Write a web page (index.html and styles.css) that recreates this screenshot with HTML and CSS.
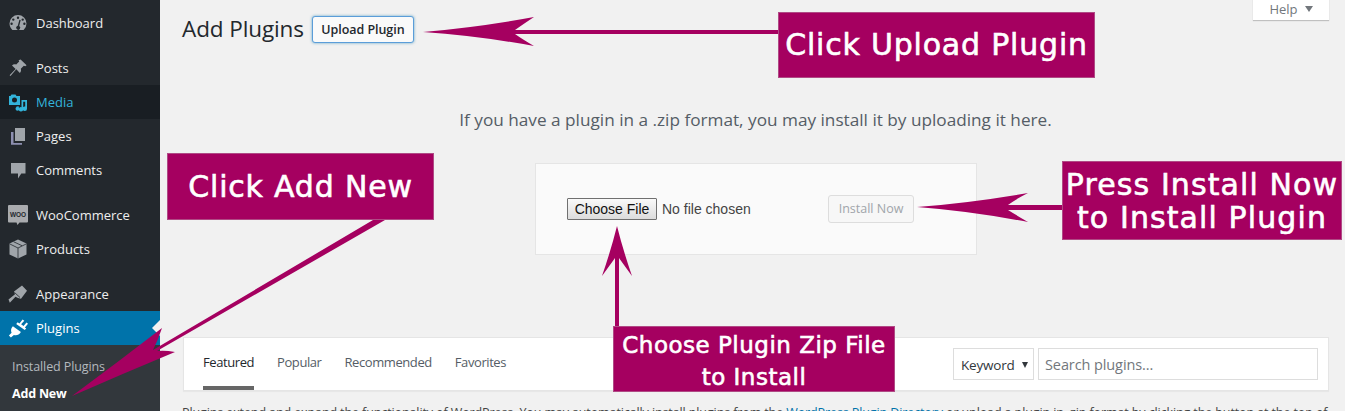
FILE: index.html
```html
<!DOCTYPE html>
<html lang="en">
<head>
<meta charset="utf-8">
<title>Add Plugins</title>
<link rel="stylesheet" href="styles.css">
</head>
<body>
<div class="page">
  <nav class="sidebar">
    <ul class="menu">
      <li class="item">
        <svg class="icon" viewBox="0 0 20 20"><path fill-rule="evenodd" d="M10 2a8.500 8.500 0 0 0-8.500 8.500c0 2.600 1.100 4.800 2.900 6.400h11.200a8.500 8.500 0 0 0 2.900-6.400A8.500 8.500 0 0 0 10 2zM10 3.600a1.200 1.200 0 1 1 0 2.400 1.200 1.200 0 0 1 0-2.400zM5.300 5.400a1.200 1.200 0 1 1 0 2.400 1.200 1.200 0 0 1 0-2.400zM14.700 5.400a1.200 1.200 0 1 1 0 2.400 1.200 1.200 0 0 1 0-2.400zM3.600 9.600a1.200 1.200 0 1 1 0 2.400 1.200 1.200 0 0 1 0-2.400zM16.400 9.600a1.200 1.200 0 1 1 0 2.400 1.200 1.200 0 0 1 0-2.400zM12.700 7l-1.500 6a2 2 0 1 1-2.400.3 2 2 0 0 1 1-.6l1.600-6z"/></svg>
        <span>Dashboard</span>
      </li>
      <li class="item gap">
        <svg class="icon" viewBox="0 0 20 20"><path d="M12.600 1.500l6 5.800-1.300 1-1.500-.6-3 3c.5 1.600.2 3-.9 4.200L8.300 11.300 2.500 18l-.9-.8 6-6.300L4 7.400c1.100-1.100 2.600-1.400 4.200-.8l3-3-.6-1.400z"/></svg>
        <span>Posts</span>
      </li>
      <li class="item hover">
        <svg class="icon" viewBox="0 0 20 20"><path fill-rule="evenodd" d="M3.500 2.500h4l1 1.500H12v9H1V4h1.500zM6.500 5.500a2.500 2.500 0 1 0 0 5 2.500 2.500 0 0 0 0-5z"/><path d="M13.500 8H19v8.700a2.200 2.200 0 1 1-1.800-2.100V9.800h-2v7.500a2.200 2.200 0 1 1-1.700-2.100zM7.500 14.500H11v-.5H8.500v.5z"/><circle cx="9.500" cy="16.800" r="2"/></svg>
        <span>Media</span>
      </li>
      <li class="item">
        <svg class="icon" viewBox="0 0 20 20"><path d="M7 2h10v13H7z"/><path class="pale" d="M3 6h2.500v11H14v1.800H3z"/></svg>
        <span>Pages</span>
      </li>
      <li class="item">
        <svg class="icon" viewBox="0 0 20 20"><path d="M3 3h14.500v10.500h-4.200L10 18.500v-5H3z"/></svg>
        <span>Comments</span>
      </li>
      <li class="item gap">
        <svg class="icon" viewBox="0 0 20 20"><path class="bubble" d="M1 0h18a1 1 0 0 1 1 1v15.500a1 1 0 0 1-1 1h-7.500L9.500 20l-1-2.500H1a1 1 0 0 1-1-1V1a1 1 0 0 1 1-1z"/><text class="woo" x="10" y="11.500" text-anchor="middle">WOO</text></svg>
        <span>WooCommerce</span>
      </li>
      <li class="item">
        <svg class="icon" viewBox="0 0 20 20"><path d="M10 .5l8.500 4v11L10 19.500l-8.500-4v-11z"/><path class="cut" d="M1.500 4.800L10 9l8.500-4.200M10 9v10.500M5.500 2.700l8.500 4"/></svg>
        <span>Products</span>
      </li>
      <li class="item gap">
        <svg class="icon" viewBox="0 0 20 20"><path d="M1.800 18.800L.5 15.500 7 10.300 6 7.500 14 1.500l5 5.200-6 8-3-.8-2.500-1.200z"/><path class="cut" d="M6.500 8.500l5.500 5"/></svg>
        <span>Appearance</span>
      </li>
      <li class="item current">
        <svg class="icon" viewBox="0 0 20 20"><path d="M14.600 1.500l1.700 1.200-3.200 3.600 2.400 1.700 3-3.500 1.500 1.300-3.100 3.600 1.300 1-1.500 1.700-8.500-6.200 1.500-1.700 1.700 1.200zM4.900 8.300l8 5.700c-1.800 3-4.400 3.800-7 3l-3 2.500-2-1.900 2.700-2.800c-1-2.300-.6-4.600 1.300-6.500z"/></svg>
        <span>Plugins</span>
      </li>
      <li class="submenu">
        <span class="sub-link">Installed Plugins</span>
        <span class="sub-link active">Add New</span>
      </li>
    </ul>
  </nav>

  <main class="content">
    <header class="top">
      <div class="heading">
        <h1>Add Plugins</h1>
        <a class="upload-btn">Upload Plugin</a>
      </div>
      <div class="help">Help <i class="caret"></i></div>
    </header>

    <p class="intro">If you have a plugin in a .zip format, you may install it by uploading it here.</p>

    <section class="upload-box">
      <div class="file">
        <span class="file-btn">Choose File</span>
        <span class="file-name">No file chosen</span>
      </div>
      <span class="install-btn">Install Now</span>
    </section>

    <section class="filter">
      <ul class="tabs">
        <li class="tab selected">Featured</li>
        <li class="tab">Popular</li>
        <li class="tab">Recommended</li>
        <li class="tab">Favorites</li>
      </ul>
      <div class="search">
        <div class="keyword">Keyword <i class="caret dark"></i></div>
        <div class="search-input">Search plugins...</div>
      </div>
    </section>

    <p class="desc">Plugins extend and expand the functionality of WordPress. You may automatically install plugins from the <a>WordPress Plugin Directory</a> or upload a plugin in .zip format by clicking the button at the top of this page.</p>
  </main>
</div>

<svg class="arrows" viewBox="0 0 1345 411">
  <path d="M423 32Q480 27 534 17Q522 25 515 30L778 30V34L515 34Q522 39 534 46Q480 36 423 32Z"/>
  <path d="M917 207Q970 203 1028 193Q1016 199 1008 205L1062 205V210L1008 210Q1016 215 1028 222Q970 211 917 207Z"/>
  <path d="M617 226Q623 250 632 276Q624 265 619 258V326H615V258Q610 265 602 276Q611 250 617 226Z"/>
  <path d="M72 396Q118 362 162 328Q158 340 153 350L373 220H385L157 351Q165 350 175 352Q122 374 72 396Z"/>
</svg>

<div class="callout c-upload">Click Upload Plugin</div>
<div class="callout c-add">Click Add New</div>
<div class="callout c-install">Press Install Now<br>to Install Plugin</div>
<div class="callout c-choose">Choose Plugin Zip File<br>to Install</div>
</body>
</html>
```

FILE: styles.css
```css
* { box-sizing: border-box; }
html, body { margin: 0; height: 411px; overflow: hidden; background: #f1f1f1; }
body { position: relative; font-family: "Open Sans", "Liberation Sans", sans-serif; font-size: 13px; color: #444; }

.page { display: flex; height: 411px; overflow: hidden; }

/* Sidebar */
.sidebar { flex: 0 0 160px; background: #23282d; }
.menu { list-style: none; margin: 0; padding: 6px 0 0; }
.item { position: relative; display: flex; align-items: center; height: 34px; padding-left: 8px; color: #eee; font-size: 13px; }
.item.gap { margin-top: 11px; }
.icon { flex: 0 0 20px; width: 20px; height: 20px; margin-right: 8px; fill: #a0a5aa; }
.pale { fill: #8d8fb0; }
.cut { fill: none; stroke: #23282d; stroke-width: .8; }
.bubble { fill: #a9abae; }
.woo { font: 700 6.500px "Liberation Sans", sans-serif; fill: #23282d; }
.item.hover { background: #191e23; color: #33b4db; }
.item.hover .icon { fill: #33b4db; }
.item.current { background: #0073aa; color: #fff; }
.item.current .icon { fill: #fff; }
.item.current::after { content: ""; position: absolute; right: 0; top: 9px; border: 8px solid transparent; border-right-color: #f1f1f1; border-left-width: 0; }
.submenu { display: flex; flex-direction: column; height: 70px; padding-top: 9px; background: #32373c; }
.sub-link { height: 27px; line-height: 25px; padding-left: 12px; font-size: 12.500px; letter-spacing: -.1px; color: #b4b9be; }
.sub-link.active { color: #fff; font-weight: 700; letter-spacing: -.2px; }

/* Main column */
.content { flex: 1 1 auto; min-width: 0; padding: 0 16px 0 22px; }
.top { display: flex; justify-content: space-between; align-items: flex-start; height: 43px; }
.heading { display: flex; align-items: center; padding-top: 15px; }
h1 { margin: 0 8px 0 0; font-size: 22.500px; line-height: 28px; font-weight: 400; color: #23282d; letter-spacing: -.1px; }
.upload-btn { display: block; width: 102px; height: 27px; line-height: 25px; text-align: center; font-size: 12.500px; font-weight: 600; color: #23282d; background: #fafafa; border: 1px solid #5b9dd9; border-radius: 3px; box-shadow: 0 0 3px rgba(0,115,170,.6); letter-spacing: -.05px; }
.help { display: flex; align-items: center; justify-content: center; gap: 7px; width: 76px; height: 22px; margin-top: -2px; padding-bottom: 1px; font-size: 13px; color: #72777c; background: #fff; box-shadow: 0 1px 1px rgba(0,0,0,.2); }
.caret { display: block; width: 0; height: 0; border: 4px solid transparent; border-top: 6px solid #72777c; border-bottom-width: 0; }
.caret.dark { border-top-color: #32373c; border-width: 6px 3.500px 0; }

.intro { margin: 65px 0 0; text-align: center; font-size: 17.200px; line-height: 24px; color: #555d66; }

.upload-box { display: flex; align-items: center; justify-content: space-between; width: 442px; height: 92px; margin: 31px 0 0 353px; padding: 0 62px 0 31px; background: #fafafa; border: 1px solid #e5e5e5; }
.file { display: flex; align-items: center; margin-top: -1px; font-family: "Liberation Sans", Arial, sans-serif; font-size: 14px; }
.file-btn { display: block; width: 90px; height: 22px; line-height: 20px; text-align: center; color: #111; background: linear-gradient(#fafafa, #dcdcdc); border: 1px solid #707070; border-radius: 1px; }
.file-name { margin-left: 5px; color: #444; }
.install-btn { display: block; width: 86px; height: 28px; line-height: 26px; text-align: center; font-size: 12.500px; color: #a0a5aa; background: #f7f7f7; border: 1px solid #ddd; border-radius: 3px; }

.filter { display: flex; justify-content: space-between; align-items: flex-start; height: 54px; margin: 82px 0 0 1px; padding: 0 10px 0 19px; background: #fff; border: 1px solid #e5e5e5; box-shadow: 0 1px 1px rgba(0,0,0,.04); }
.tabs { display: flex; gap: 23px; list-style: none; margin: 0; padding: 0; }
.tab { height: 52px; line-height: 49px; font-size: 13px; color: #555d66; letter-spacing: -.42px; }
.tab.selected { color: #23282d; border-bottom: 4px solid #666; }
.search { display: flex; gap: 4px; margin-top: 10px; }
.keyword { display: flex; align-items: center; justify-content: space-between; width: 81px; height: 32px; padding: 2px 5px 0 7px; font-size: 13.500px; color: #32373c; background: #fff; border: 1px solid #ddd; letter-spacing: -.2px; }
.search-input { width: 280px; height: 32px; line-height: 31px; padding-left: 6px; font-size: 14.500px; color: #72777c; background: #fff; border: 1px solid #ddd; letter-spacing: -.1px; }

.desc { margin: 12px -16px 0 0; font-size: 12.500px; line-height: 20px; color: #444; letter-spacing: -.11px; }
.desc a { color: #0073aa; }

/* Annotations over the screenshot */
.arrows { position: absolute; left: 0; top: 0; width: 1345px; height: 411px; fill: #a50060; pointer-events: none; }
.callout { position: absolute; display: flex; align-items: center; justify-content: center; text-align: center; background: #a50060; border: 1px solid #b04a85; color: #fff; font-family: "DejaVu Sans", Verdana, sans-serif; line-height: 33px; white-space: nowrap; -webkit-text-stroke: .6px #fff; }
.c-upload { left: 778px; top: 12px; width: 317px; height: 66px; padding-bottom: 2px; font-size: 30px; letter-spacing: .8px; }
.c-add { left: 167px; top: 153px; width: 267px; height: 67px; font-size: 30px; letter-spacing: .8px; }
.c-install { left: 1062px; top: 161px; width: 280px; height: 79px; font-size: 30px; letter-spacing: 1.100px; }
.c-choose { left: 613px; top: 326px; width: 282px; height: 66px; padding-top: 4px; font-size: 23px; line-height: 32px; letter-spacing: .5px; }
```
